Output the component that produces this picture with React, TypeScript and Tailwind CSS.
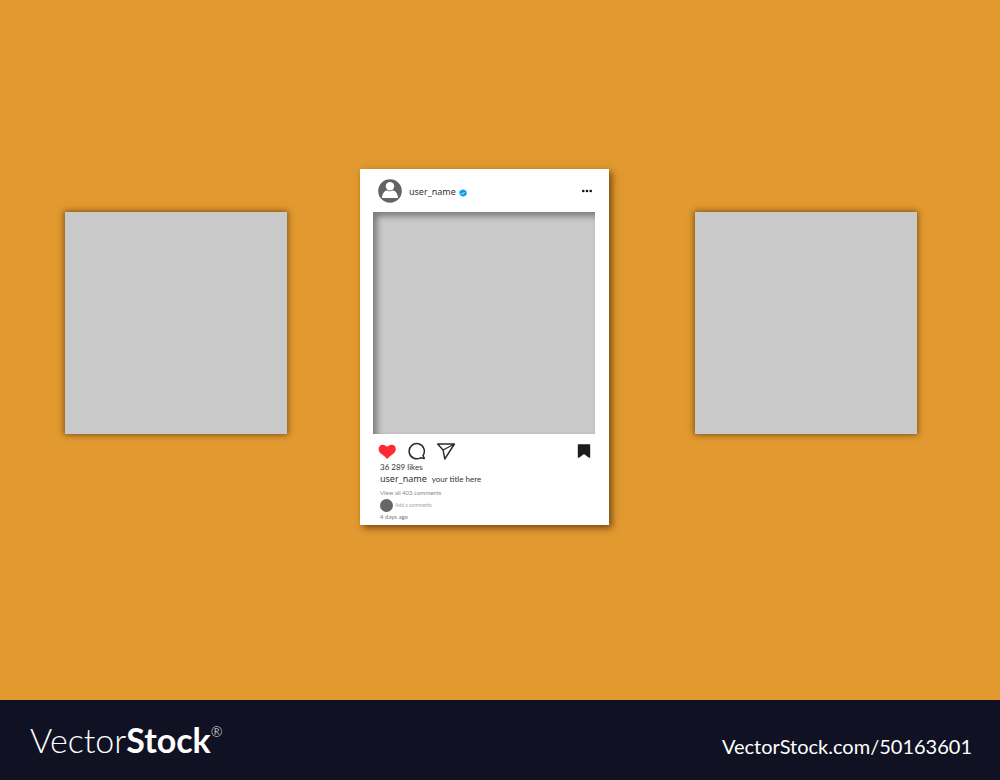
import { useState } from 'react';

const post = {
  user: 'user_name',
  likes: '36 289 likes',
  title: 'your title here',
  comments: 'View all 403 comments',
  age: '4 days ago',
};

function Avatar() {
  return (
    <svg viewBox="0 0 24 24" className="h-6 w-6" aria-hidden="true">
      <circle cx="12" cy="12" r="11.8" fill="#636363" />
      <circle cx="12" cy="7.2" r="4.2" fill="#fff" />
      <path d="M4 19c.1-4.200 2-7 5-7.600 1.600 1.100 4.400 1.100 6 0 3 .6 4.900 3.400 5 7.600z" fill="#fff" />
    </svg>
  );
}

function VerifiedBadge() {
  return (
    <svg viewBox="0 0 14 14" className="h-2 w-2" role="img" aria-label="Verified">
      <path
        d="M7 .4l1.700 1.200 2.100-.2.8 2 1.900.9-.3 2.200 .8 2-1.700 1.400-.5 2.100-2.200.2L7 13.600l-1.900-1.400-2.200-.2-.5-2.100L.7 8.500l.1-2L.5 4.300l1.900-.9.8-2 2.100.2z"
        fill="#089cf5"
      />
      <path d="M4.200 7.200l2 2 3.600-4" fill="none" stroke="#fff" strokeWidth="1.500" />
    </svg>
  );
}

function HeartIcon() {
  return (
    <svg viewBox="0 0 18 16" className="h-4 w-[18px]" aria-hidden="true">
      <path
        d="M9.200 15C7.700 13.300 5.800 12 3.800 10.300 1.800 8.600.6 7.100.6 4.900.6 2.500 2.300.8 4.700.8c1.900 0 3.500.9 4.500 2.300 1-1.400 2.600-2.300 4.500-2.300 2.400 0 4.100 1.700 4.100 4.100 0 2.200-1.200 3.700-3.200 5.400C12.600 12 10.700 13.300 9.200 15z"
        fill="#ff2a31"
      />
    </svg>
  );
}

function CommentIcon() {
  return (
    <svg viewBox="0 0 18 18" className="h-[18px] w-[18px]" aria-hidden="true">
      <path
        d="M15 13.500A7.600 7.600 0 1 0 12.500 15.800l3.800.6z"
        fill="none"
        stroke="#2b2b2b"
        strokeWidth="1.500"
        strokeLinejoin="round"
      />
    </svg>
  );
}

function SendIcon() {
  return (
    <svg viewBox="0 0 20 18" className="h-[18px] w-5" aria-hidden="true">
      <path
        d="M1.600 2h16.800L8.800 17 7.100 8zM7.100 8l11.300-6"
        fill="none"
        stroke="#2b2b2b"
        strokeWidth="1.400"
        strokeLinejoin="round"
      />
    </svg>
  );
}

function BookmarkIcon() {
  return (
    <svg viewBox="0 0 14 16" className="h-4 w-3.5" aria-hidden="true">
      <path d="M1.300.300h11.400c.3 0 .5.200.5.500v13L12 13.800 7 10 2 13.800H.8V.8c0-.3.200-.5.500-.5z" fill="#1c1c1c" />
    </svg>
  );
}

function SidePhoto({ className = '' }: { className?: string }) {
  return (
    <div
      className={`mt-[43px] h-[222px] w-[222px] shrink-0 bg-[#c9c9c9] shadow-[0_0_6px_1px_rgba(70,45,10,0.65)] ${className}`}
    />
  );
}

function PostCard() {
  const [comment, setComment] = useState('');

  return (
    <article className="w-[249px] shrink-0 bg-white text-[#333] shadow-[3px_3px_7px_rgba(70,40,0,0.7)]">
      <header className="flex h-[43px] items-center pt-px pr-4 pl-[18px]">
        <Avatar />
        <span className="ml-[7px] pt-px text-[9px] leading-3">{post.user}</span>
        <span className="ml-[3px] pt-[3px]">
          <VerifiedBadge />
        </span>
        <button className="ml-auto" aria-label="More options">
          <svg viewBox="0 0 12 4" className="h-1 w-3" fill="#111">
            <circle cx="2.300" cy="2" r="1.300" />
            <circle cx="6" cy="2" r="1.300" />
            <circle cx="9.700" cy="2" r="1.300" />
          </svg>
        </button>
      </header>

      <div className="mr-[14px] ml-[13px] h-[222px] bg-[#c9c9c9] shadow-[inset_4px_4px_6px_rgba(0,0,0,0.4)]" />

      <div className="flex h-7 items-end pr-[18px] pb-0.5 pl-[18px]">
        <button aria-label="Like">
          <HeartIcon />
        </button>
        <button className="ml-3" aria-label="Comment">
          <CommentIcon />
        </button>
        <button className="ml-2.5" aria-label="Share">
          <SendIcon />
        </button>
        <button className="ml-auto" aria-label="Save">
          <BookmarkIcon />
        </button>
      </div>

      <div className="px-5 pb-1 font-['Lato',sans-serif]">
        <p className="text-[8px] leading-[10px]">{post.likes}</p>
        <p className="mt-px flex items-baseline gap-[5px] leading-3">
          <span className="font-['Noto_Sans',sans-serif] text-[9px]">{post.user}</span>
          <span className="text-[8px]">{post.title}</span>
        </p>
        <p className="mt-1 text-[6px] leading-2 text-[#8a8a8a]">{post.comments}</p>
        <label className="mt-px flex h-[14px] items-center gap-0.5">
          <span className="h-[13px] w-[13px] shrink-0 rounded-full bg-[#666]" />
          <input
            type="text"
            aria-label="Add a comment"
            placeholder="Add a comments"
            value={comment}
            onChange={(e) => setComment(e.target.value)}
            className="h-2 min-w-0 flex-1 text-[5px] outline-none placeholder:text-[#a5a5a5]"
          />
        </label>
        <p className="mt-px text-[6px] leading-2 text-[#777]">{post.age}</p>
      </div>
    </article>
  );
}

export default function App() {
  return (
    <div className="flex min-h-screen flex-col bg-[#e29930] font-['Noto_Sans',sans-serif]">
      <main className="flex flex-1 items-start justify-center gap-[73px] pt-[169px] pr-[18px]">
        <SidePhoto />
        <PostCard />
        <SidePhoto className="ml-[13px]" />
      </main>

      <footer className="flex h-20 items-center justify-between bg-[#101223] pr-7 pl-[30px] font-['Lato',sans-serif] text-white">
        <div className="flex items-start text-[34px] leading-10">
          <span className="font-light">Vector</span>
          <span className="font-bold">Stock</span>
          <span className="text-sm leading-6 font-light">®</span>
        </div>
        <a href="#" className="mt-3 text-xl leading-6">
          VectorStock.com/50163601
        </a>
      </footer>
    </div>
  );
}
